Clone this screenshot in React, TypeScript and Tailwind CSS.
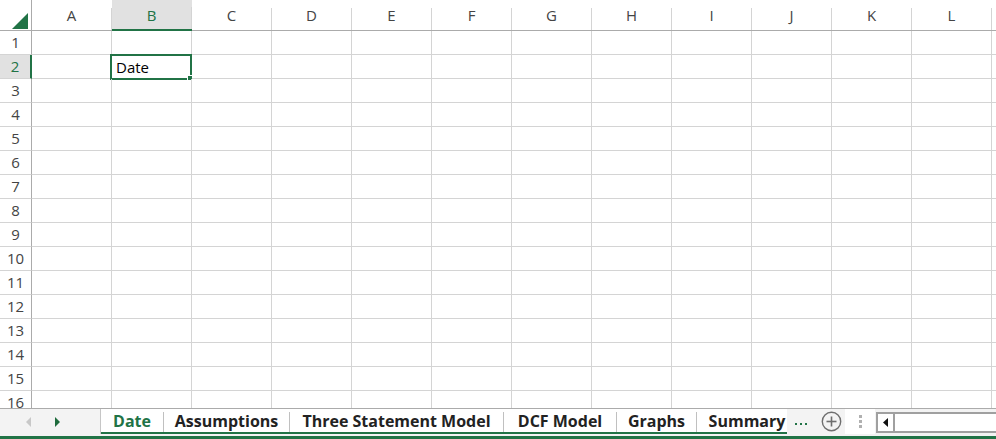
const COLS = ["A", "B", "C", "D", "E", "F", "G", "H", "I", "J", "K", "L", "M"];
const ROWS = Array.from({ length: 16 }, (_, i) => i + 1);

const TABS: [string, number][] = [
  ["Date", 62],
  ["Assumptions", 125],
  ["Three Statement Model", 213],
  ["DCF Model", 112],
  ["Graphs", 79],
  ["Summary", 100],
];

const HeaderCell = ({ label }: { label: string }) => {
  const sel = label === "B";
  return (
    <div
      className={
        "w-[80px] shrink-0 flex " +
        (sel ? "bg-[#e1e1e1] text-[#217346] border-b-2 border-[#217346]" : "border-b border-[#ababab]")
      }
    >
      <div className="flex-1 flex items-center justify-center text-[15px] pt-[1px]">{label}</div>
      <div className="w-px h-[22px] self-end bg-[#d4d4d4]" />
    </div>
  );
};

const Row = ({ n }: { n: number }) => {
  const sel = n === 2;
  return (
    <div className="flex h-[24px]">
      <div
        className={
          "w-[32px] shrink-0 flex items-center justify-center text-[15px] border-b border-[#d4d4d4] " +
          (sel ? "bg-[#e1e1e1] text-[#217346] border-r-2 border-r-[#217346]" : "border-r border-r-[#ababab]")
        }
      >
        {n}
      </div>
      {COLS.map((c) => (
        <div key={c} className="w-[80px] shrink-0 border-r border-b border-[#d4d4d4] relative flex items-center">
          {sel && c === "B" && (
            <>
              <span className="pl-[4px] pt-[1px] text-[15px] text-black">Date</span>
              <div className="absolute -left-[2px] -top-[1px] w-[82px] h-[26px] border-2 border-[#217346]">
                <div className="absolute -right-[3px] -bottom-[3px] w-[6px] h-[6px] bg-[#217346] border border-white" />
              </div>
            </>
          )}
        </div>
      ))}
    </div>
  );
};

export default function App() {
  return (
    <div className="w-[996px] h-[439px] overflow-hidden bg-white flex flex-col font-['Open_Sans','Noto_Sans',sans-serif] text-[#444]">
      {/* grid */}
      <div className="h-[408px] shrink-0 overflow-hidden">
        <div className="flex h-[31px]">
          <div className="w-[32px] shrink-0 border-r border-b border-[#ababab] flex items-end justify-end pr-[3px] pb-[1px]">
            <svg width="16" height="16" viewBox="0 0 16 16">
              <polygon points="16,0 16,16 0,16" fill="#217346" />
            </svg>
          </div>
          {COLS.map((c) => (
            <HeaderCell key={c} label={c} />
          ))}
        </div>
        {ROWS.map((n) => (
          <Row key={n} n={n} />
        ))}
      </div>

      {/* sheet tabs */}
      <div className="h-[31px] shrink-0 border-t border-[#ababab] bg-[#f3f3f3] flex flex-col">
        <div className="h-[25px] flex">
          <div className="w-[101px] shrink-0 border-r border-[#c6c6c6] flex items-center">
            <svg className="ml-[26px]" width="5" height="10" viewBox="0 0 5 10">
              <polygon points="5,0 5,10 0,5" fill="#c8c8c8" />
            </svg>
            <svg className="ml-[24px]" width="5" height="10" viewBox="0 0 5 10">
              <polygon points="0,0 0,10 5,5" fill="#1e6b3c" />
            </svg>
          </div>
          <div className="w-[686px] shrink-0 flex bg-white border-b-2 border-[#217346] overflow-hidden">
            {TABS.map(([t, w], i) => (
              <div key={t} className="flex shrink-0">
                <div
                  className={
                    "flex items-center justify-center text-[16px] font-bold whitespace-nowrap " +
                    (i === 0 ? "text-[#217346]" : "text-[#222]")
                  }
                  style={{ width: w }}
                >
                  {t}
                </div>
                {i < TABS.length - 1 && <div className="w-px h-[20px] mt-[3px] bg-[#c0c0c0]" />}
              </div>
            ))}
          </div>
          <div className="w-[58px] shrink-0 flex items-center">
            <div className="ml-[8px] mt-[5px] flex gap-[3px]">
              <div className="w-[2px] h-[2px] bg-[#217346]" />
              <div className="w-[2px] h-[2px] bg-[#217346]" />
              <div className="w-[2px] h-[2px] bg-[#217346]" />
            </div>
            <svg className="ml-[14px]" width="21" height="21" viewBox="0 0 21 21">
              <circle cx="10.5" cy="10.5" r="9.2" fill="none" stroke="#6e6e6e" strokeWidth="1.4" />
              <line x1="5.5" y1="10.5" x2="15.5" y2="10.5" stroke="#6e6e6e" strokeWidth="1.6" />
              <line x1="10.5" y1="5.5" x2="10.5" y2="15.5" stroke="#6e6e6e" strokeWidth="1.6" />
            </svg>
          </div>
          <div className="w-[30px] shrink-0 bg-white flex flex-col items-center justify-center gap-[2px] pl-[1px]">
            <div className="w-[3px] h-[3px] bg-[#b0b0b0]" />
            <div className="w-[3px] h-[3px] bg-[#b0b0b0]" />
            <div className="w-[3px] h-[3px] bg-[#b0b0b0]" />
          </div>
          <div className="flex-1 pl-[1px] pt-[3px]">
            <div className="h-[21px] flex border-2 border-r-0 border-[#a0a0a0] bg-white">
              <div className="w-[17px] border-r-2 border-[#a0a0a0] flex items-center justify-center">
                <svg width="5" height="9" viewBox="0 0 5 9">
                  <polygon points="5,0 5,9 0,4.5" fill="#111" />
                </svg>
              </div>
            </div>
          </div>
        </div>
        <div className="h-[2px]" />
        <div className="h-[3px] bg-[#217346]" />
      </div>
    </div>
  );
}
